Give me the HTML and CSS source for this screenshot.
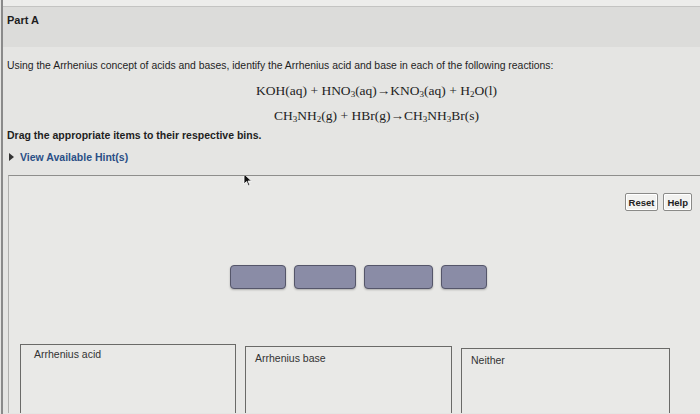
FILE: index.html
```html
<!DOCTYPE html>
<html>
<head>
<meta charset="utf-8">
<link rel="stylesheet" href="styles.css">
</head>
<body>
<div class="frame">
  <div class="topstrip"></div>
  <div class="header"><span class="part">Part A</span></div>
  <div class="content">
    <p class="intro">Using the Arrhenius concept of acids and bases, identify the Arrhenius acid and base in each of the following reactions:</p>
    <div class="eqs">
      <div class="eq">KOH(aq) + HNO<sub>3</sub>(aq)→KNO<sub>3</sub>(aq) + H<sub>2</sub>O(l)</div>
      <div class="eq">CH<sub>3</sub>NH<sub>2</sub>(g) + HBr(g)→CH<sub>3</sub>NH<sub>3</sub>Br(s)</div>
    </div>
    <p class="drag">Drag the appropriate items to their respective bins.</p>
    <div class="hint"><span class="tri"></span>View Available Hint(s)</div>
  </div>
  <div class="board">
    <div class="tools">
      <button class="btn">Reset</button>
      <button class="btn">Help</button>
    </div>
    <div class="tiles">
      <div class="tile t1"></div>
      <div class="tile t2"></div>
      <div class="tile t3"></div>
      <div class="tile t4"></div>
    </div>
    <div class="bins">
      <div class="bin b1">Arrhenius acid</div>
      <div class="bin b2">Arrhenius base</div>
      <div class="bin b3">Neither</div>
    </div>
    <svg class="cursor" width="10" height="14" viewBox="0 0 10 14"><path d="M1 1 L1 11 L3.5 8.5 L5.5 13 L7 12.3 L5 8 L8.5 8 Z" fill="#111" stroke="#fff" stroke-width="0.8"/></svg>
  </div>
</div>
</body>
</html>
```
FILE: styles.css
```css
html, body {
  margin: 0;
  padding: 0;
  height: 414px;
  overflow: hidden;
}
body {
  background: #e5e5e3;
  font-family: "Liberation Sans", Arial, sans-serif;
  color: #1e1e1e;
}
.frame {
  border-left: 2px solid #8a8a8a;
  height: 414px;
  margin-left: 1px;
  box-sizing: border-box;
  position: relative;
  overflow: hidden;
}
.topstrip {
  height: 6px;
  background: #ededeb;
  border-bottom: 1px solid #c4c4c2;
}
.header {
  height: 40px;
  background: #dcdcda;
  padding-left: 4px;
  box-sizing: border-box;
  padding-top: 3px;
}
.part {
  font-weight: bold;
  font-size: 11px;
}
.content {
  padding: 0 4px;
}
.intro {
  margin: 12px 0 0 0;
  font-size: 10.4px;
  line-height: 13px;
}
.eqs {
  margin-left: 50px;
  text-align: center;
  font-family: "Liberation Serif", "Times New Roman", serif;
  font-size: 13.5px;
  color: #222;
}
.eq {
  line-height: 16px;
}
.eq:first-child {
  margin-top: 11px;
}
.eq + .eq {
  margin-top: 9px;
}
.eq sub {
  font-size: 9px;
  vertical-align: -2px;
  line-height: 0;
}
.drag {
  margin: 5px 0 0 0;
  font-weight: bold;
  font-size: 10.5px;
  line-height: 13px;
}
.hint {
  margin-top: 9px;
  margin-left: 2px;
  font-weight: bold;
  font-size: 10.5px;
  color: #2a4f86;
  display: flex;
  align-items: center;
  gap: 6px;
}
.tri {
  width: 0;
  height: 0;
  border-left: 5px solid #333;
  border-top: 4px solid transparent;
  border-bottom: 4px solid transparent;
}
.board {
  margin-top: 12px;
  margin-left: 5px;
  border-top: 1px solid #8e8e8c;
  border-left: 1px solid #b0b0ae;
  background: #e8e8e6;
  height: 237px;
  position: relative;
  overflow: hidden;
}
.tools {
  display: flex;
  justify-content: flex-end;
  gap: 5px;
  padding: 17px 8px 0 0;
}
.btn {
  font-family: "Liberation Sans", Arial, sans-serif;
  font-weight: bold;
  font-size: 9.5px;
  color: #222;
  background: #f2f2f0;
  border: 1px solid #8a8a88;
  border-radius: 2px;
  padding: 2px 3px;
  height: 18px;
  box-shadow: inset 0 0 0 1px #fff;
}
.tiles {
  display: flex;
  gap: 8px;
  margin-top: 54px;
  margin-left: 221px;
}
.tile {
  height: 24px;
  background: #8a8ca6;
  border: 1.5px solid #55566a;
  border-radius: 4px;
  box-sizing: border-box;
  box-shadow: 0 1px 2px rgba(0,0,0,0.25);
}
.t1 { width: 56px; }
.t2 { width: 62px; }
.t3 { width: 69px; }
.t4 { width: 46px; }
.bins {
  display: flex;
  gap: 9px;
  margin-top: 55px;
  margin-left: 11px;
}
.bin {
  height: 70px;
  border: 1px solid #6a6a68;
  border-bottom: none;
  box-sizing: border-box;
  padding: 3px 0 0 13px;
  font-size: 10.5px;
  color: #333;
  background: #e9e9e7;
}
.b1 { width: 216px; }
.b2 { width: 207px; margin-top: 2px; padding-left: 9px; padding-top: 5px; }
.b3 { width: 209px; margin-top: 4px; padding-left: 9px; padding-top: 5px; }
.cursor {
  position: absolute;
  left: 234px;
  top: -3px;
}
```
